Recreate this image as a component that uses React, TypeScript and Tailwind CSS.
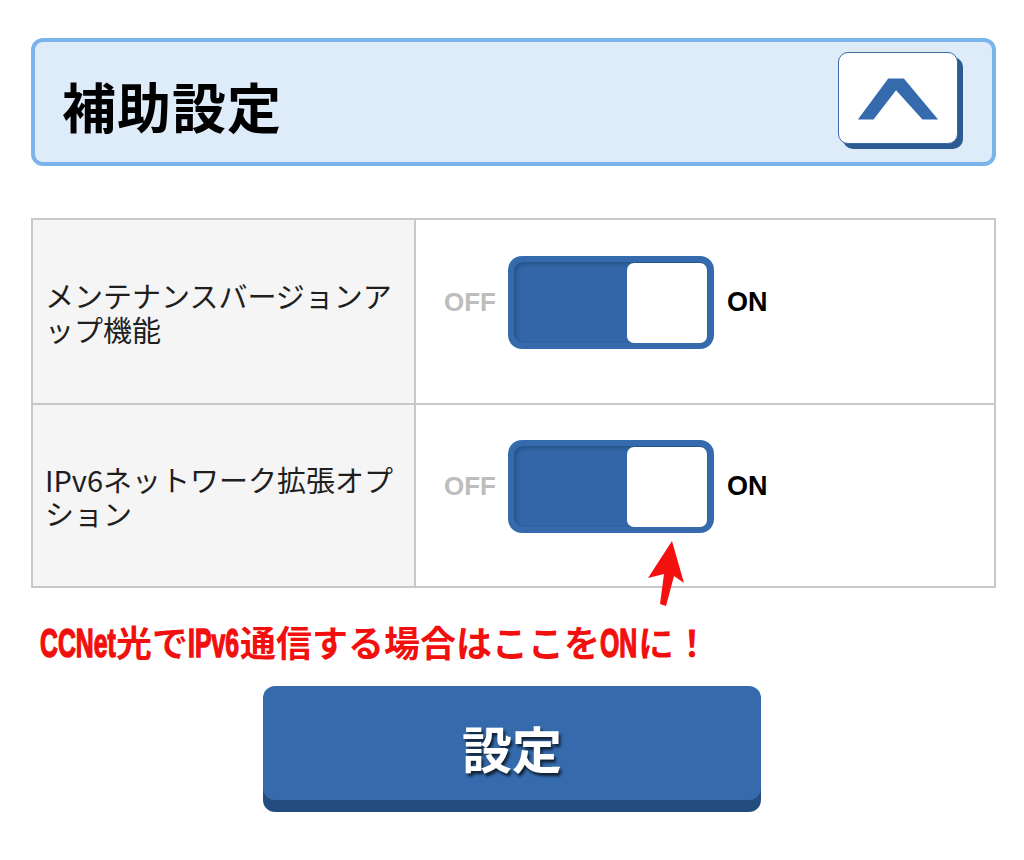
import React from 'react';

const jp = { fontFamily: '"Noto Sans CJK JP", "Noto Sans", sans-serif' };
const latin = { fontFamily: '"Liberation Sans", Arial, sans-serif' };

function Toggle() {
  return (
    <div className="flex items-center pl-[28px] pb-[18px]">
      <span className="text-[26px] font-bold text-[#bdbdbd] mr-[12px]" style={latin}>OFF</span>
      <div className="w-[206px] h-[93px] rounded-[14px] bg-[#356bad] p-[6px]">
        <div className="flex h-full rounded-[9px] bg-[#3266a8] shadow-[inset_2px_2px_4px_rgba(0,0,0,0.22)]">
          <div className="flex-1" />
          <div className="w-[80px] h-[80px] mt-[1px] mr-[1px] rounded-[7px] bg-white" />
        </div>
      </div>
      <span className="text-[27px] font-bold text-black ml-[13px]" style={latin}>ON</span>
    </div>
  );
}

// condensed latin chunk inside the red note
function Cond({ text, w }: { text: string; w: number }) {
  return (
    <span className="inline-block overflow-visible align-baseline whitespace-nowrap" style={{ width: w }}>
      <span className="inline-block origin-left scale-x-[0.62] font-bold text-[40px] [-webkit-text-stroke:1.5px_#f2100f]" style={latin}>
        {text}
      </span>
    </span>
  );
}

export default function App() {
  const rows = [
    'メンテナンスバージョンアップ機能',
    'IPv6ネットワーク拡張オプション',
  ];

  return (
    <div className="relative w-[1024px] min-h-[860px] bg-white pl-[31px] pr-[28px] pt-[38px]" style={jp}>
      {/* section header */}
      <div className="h-[128px] flex items-center justify-between border-4 border-[#7bb4eb] bg-[#deecf9] rounded-[12px] pl-[27px] pr-[34px]">
        <h1 className="text-[54px] font-bold text-black leading-none tracking-[1px] pt-[8px]">補助設定</h1>
        <button className="relative w-[120px] h-[92px] mb-[8px] rounded-[10px] bg-white border-[1.5px] border-[#3a6aa5] shadow-[5px_5px_0_#2c5b94]">
          <svg viewBox="0 0 120 92" className="absolute inset-0 w-full h-full">
            <polygon points="19,68 50,26 66,26 101,68 85,68 58,38 35,68" fill="#356bad" />
          </svg>
        </button>
      </div>

      {/* settings table */}
      <div className="mt-[52px] border-2 border-[#c8c8c8]">
        {rows.map((label, i) => (
          <div key={label} className={`grid grid-cols-[383px_1fr] h-[183px] ${i > 0 ? 'border-t-2 border-[#c8c8c8]' : ''}`}>
            <div className="flex items-center bg-[#f5f5f5] border-r-2 border-[#c8c8c8] pl-[12px] pr-[10px]">
              <p className="text-[29px] leading-[34px] text-[#1e1e1e]">{label}</p>
            </div>
            <div className="flex items-center bg-white">
              <Toggle />
            </div>
          </div>
        ))}
      </div>

      {/* red annotation */}
      <p className="mt-[32px] ml-[9px] text-[36px] leading-[43px] font-bold text-[#f2100f] whitespace-nowrap">
        <Cond text="CCNet" w={76} />
        光で
        <Cond text="IPv6" w={52} />
        通信する場合はここを
        <Cond text="ON" w={38} />
        に！
      </p>

      <svg viewBox="0 0 50 75" className="absolute left-[640px] top-[535px] w-[50px] h-[75px]">
        <polygon points="32,6 44,48 34,41 26,71 20,69 24,39 8,43" fill="#f4100f" />
      </svg>

      {/* submit */}
      <div className="flex justify-center mt-[21px] pr-[3px]">
        <button className="w-[498px] h-[114px] pt-[8px] rounded-[12px] bg-[#356bad] shadow-[0_12px_0_#244d7f] text-white text-[50px] font-bold [text-shadow:2px_3px_3px_rgba(0,0,0,0.7)]">
          設定
        </button>
      </div>
    </div>
  );
}
